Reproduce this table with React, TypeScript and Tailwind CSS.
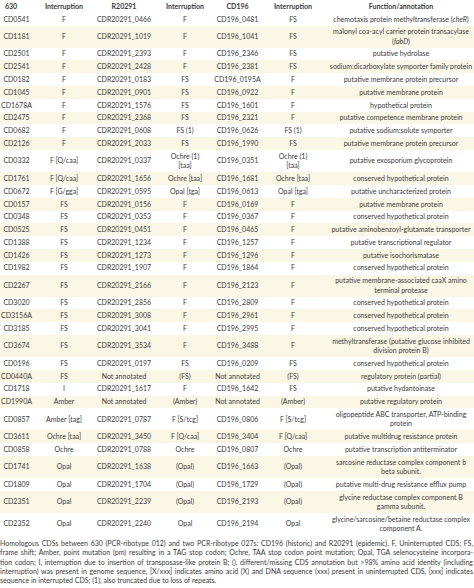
import React from "react";

type Cell = React.ReactNode;

const rows: Cell[][] = [
  ["CD0541", "F", "CDR20291_0466", "F", "CD196_0481", "FS", <>chemotaxis protein methyltransferase (<i>cheR</i>)</>],
  ["CD1181", "F", "CDR20291_1019", "F", "CD196_1041", "FS", <>malonyl coa-acyl carrier protein transacylase<br />(<i>fabD</i>)</>],
  ["CD2501", "F", "CDR20291_2393", "F", "CD196_2346", "FS", "putative hydrolase"],
  ["CD2541", "F", "CDR20291_2428", "F", "CD196_2381", "FS", "sodium:dicarboxylate symporter family protein"],
  ["CD0182", "F", "CDR20291_0183", "FS", "CD196_0195A", "F", "putative membrane protein precursor"],
  ["CD1045", "F", "CDR20291_0901", "FS", "CD196_0922", "F", "putative membrane protein"],
  ["CD1678A", "F", "CDR20291_1576", "FS", "CD196_1601", "F", "hypothetical protein"],
  ["CD2475", "F", "CDR20291_2368", "FS", "CD196_2321", "F", "putative competence membrane protein"],
  ["CD0682", "F", "CDR20291_0608", "FS (1)", "CD196_0626", "FS (1)", "putative sodium:solute symporter"],
  ["CD2126", "F", "CDR20291_2033", "FS", "CD196_1990", "FS", "putative membrane protein precursor"],
  ["CD0332", "F [Q/caa]", "CDR20291_0337", <>Ochre (1)<br />[taa]</>, "CD196_0351", <>Ochre (1)<br />[taa]</>, "putative exosporium glycoprotein"],
  ["CD1761", "F [Q/caa]", "CDR20291_1656", "Ochre [taa]", "CD196_1681", "Ochre [taa]", "conserved hypothetical protein"],
  ["CD0672", "F [G/gga]", "CDR20291_0595", "Opal [tga]", "CD196_0613", "Opal [tga]", "putative uncharacterized protein"],
  ["CD0157", "FS", "CDR20291_0156", "F", "CD196_0169", "F", "putative membrane protein"],
  ["CD0348", "FS", "CDR20291_0353", "F", "CD196_0367", "F", "conserved hypothetical protein"],
  ["CD0525", "FS", "CDR20291_0451", "F", "CD196_0465", "F", "putative aminobenzoyl-glutamate transporter"],
  ["CD1388", "FS", "CDR20291_1234", "F", "CD196_1257", "F", "putative transcriptional regulator"],
  ["CD1426", "FS", "CDR20291_1273", "F", "CD196_1296", "F", "putative isochorismatase"],
  ["CD1982", "FS", "CDR20291_1907", "F", "CD196_1864", "F", "conserved hypothetical protein"],
  ["CD2267", "FS", "CDR20291_2166", "F", "CD196_2123", "F", <>putative membrane-associated caaX amino<br />terminal protease</>],
  ["CD3020", "FS", "CDR20291_2856", "F", "CD196_2809", "F", "conserved hypothetical protein"],
  ["CD3156A", "FS", "CDR20291_3008", "F", "CD196_2961", "F", "conserved hypothetical protein"],
  ["CD3185", "FS", "CDR20291_3041", "F", "CD196_2995", "F", "conserved hypothetical protein"],
  ["CD3674", "FS", "CDR20291_3534", "F", "CD196_3488", "F", <>methyltransferase (putative glucose inhibited<br />division protein B)</>],
  ["CD0196", "FS", "CDR20291_0197", "FS", "CD196_0209", "FS", "conserved hypothetical protein"],
  ["CD0440A", "FS", "Not annotated", "(FS)", "Not annotated", "(FS)", "regulatory protein (partial)"],
  ["CD1718", "I", "CDR20291_1617", "F", "CD196_1642", "FS", "putative hydantoinase"],
  ["CD1990A", "Amber", "Not annotated", "(Amber)", "Not annotated", "(Amber)", "putative regulatory protein"],
  ["CD0857", "Amber [tag]", "CDR20291_0787", "F [S/tcg]", "CD196_0806", "F [S/tcg]", <>oligopeptide ABC transporter, ATP-binding<br />protein</>],
  ["CD3611", "Ochre [taa]", "CDR20291_3450", "F [Q/caa]", "CD196_3404", "F [Q/caa]", "putative multidrug resistance protein"],
  ["CD0858", "Ochre", "CDR20291_0788", "Ochre", "CD196_0807", "Ochre", "putative transcription antiterminator"],
  ["CD1741", "Opal", "CDR20291_1638", "(Opal)", "CD196_1663", "(Opal)", <>sarcosine reductase complex component b<br />beta subunit.</>],
  ["CD1809", "Opal", "CDR20291_1704", "(Opal)", "CD196_1729", "(Opal)", "putative multi-drug resistance efflux pump"],
  ["CD2351", "Opal", "CDR20291_2239", "(Opal)", "CD196_2193", "(Opal)", <>glycine reductase complex component B<br />gamma subunit.</>],
  ["CD2352", "Opal", "CDR20291_2240", "Opal", "CD196_2194", "Opal", <>glycine/sarcosine/betaine reductase complex<br />component A.</>],
];

const header = ["630", "Interruption", "R20291", "Interruption", "CD196", "Interruption", "Function/annotation"];

const caption = [
  "Homologous CDSs between 630 (PCR-ribotype 012) and two PCR-ribotype 027s: CD196 (historic) and R20291 (epidemic). F, Uninterrupted CDS; FS,",
  "frame shift; Amber, point mutation (pm) resulting in a TAG stop codon; Ochre, TAA stop codon point mutation; Opal, TGA selenocysteine incorpora-",
  "tion codon; I, interruption due to insertion of transposase-like protein B; (), different/missing CDS annotation but >98% amino acid identity (including",
  "interruption) was present in genome sequence, [X/xxx] indicates amino acid (X) and DNA sequence (xxx) present in uninterrupted CDS, [xxx] indicates",
];

const grid = "grid grid-cols-[33px_62px_58px_64px_41px_70px_146px]";

const Row = ({ cells, shaded, head }: { cells: Cell[]; shaded?: boolean; head?: boolean }) => (
  <div className={`${grid} ${shaded ? "bg-[#fbf7e6]" : "bg-white"} ${head ? "font-bold" : ""}`}>
    {cells.map((c, i) => (
      <div
        key={i}
        className={`flex items-center py-[1.75px] text-center whitespace-nowrap ${head && i === 0 ? "justify-start pl-[5px]" : "justify-center"}`}
      >
        <span>{c}</span>
      </div>
    ))}
  </div>
);

export default function App() {
  return (
    <div className="w-[474px] h-[588px] overflow-hidden bg-white text-[#3a3a3a] text-[7px] leading-[9.3px] [font-family:Lato,sans-serif]">
      <Row cells={header} head />
      {rows.map((r, i) => (
        <Row key={i} cells={r} shaded={i % 2 === 1} />
      ))}
      <div className="mt-[4px] pr-[1px]">
        {caption.map((l, i) => (
          <div key={i} className="text-justify [text-align-last:justify]">
            {l}
          </div>
        ))}
        <div>sequence in interrupted CDS; (1), also truncated due to loss of repeats.</div>
      </div>
    </div>
  );
}
